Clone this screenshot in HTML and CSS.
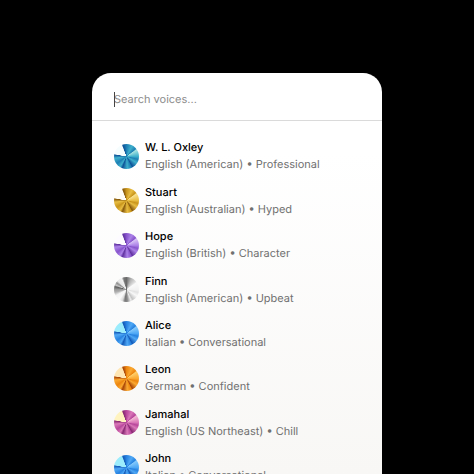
FILE: index.html
```html
<!DOCTYPE html>
<html lang="en">
<head>
    <meta charset="UTF-8">
    <meta name="viewport" content="width=device-width, initial-scale=1.0">
    <title>Voices</title>
    <link rel="stylesheet" href="styles.css">
</head>
<body>

<main class="panel">
    <div class="search">
        <input type="text" class="search-input" placeholder="Search voices..." aria-label="Search voices">
    </div>

    <ul class="voices">
        <li class="voice">
            <span class="orb teal"></span>
            <div>
                <div class="name">W. L. Oxley</div>
                <div class="detail">English (American) • Professional</div>
            </div>
        </li>
        <li class="voice">
            <span class="orb gold"></span>
            <div>
                <div class="name">Stuart</div>
                <div class="detail">English (Australian) • Hyped</div>
            </div>
        </li>
        <li class="voice">
            <span class="orb purple"></span>
            <div>
                <div class="name">Hope</div>
                <div class="detail">English (British) • Character</div>
            </div>
        </li>
        <li class="voice">
            <span class="orb silver"></span>
            <div>
                <div class="name">Finn</div>
                <div class="detail">English (American) • Upbeat</div>
            </div>
        </li>
        <li class="voice">
            <span class="orb blue"></span>
            <div>
                <div class="name">Alice</div>
                <div class="detail">Italian • Conversational</div>
            </div>
        </li>
        <li class="voice">
            <span class="orb orange"></span>
            <div>
                <div class="name">Leon</div>
                <div class="detail">German • Confident</div>
            </div>
        </li>
        <li class="voice">
            <span class="orb pink"></span>
            <div>
                <div class="name">Jamahal</div>
                <div class="detail">English (US Northeast) • Chill</div>
            </div>
        </li>
        <li class="voice">
            <span class="orb blue"></span>
            <div>
                <div class="name">John</div>
                <div class="detail">Italian • Conversational</div>
            </div>
        </li>
    </ul>
</main>

</body>
</html>
```
FILE: styles.css
```css
* {
    box-sizing: border-box;
}
body {
    margin: 0;
    height: 100vh;
    overflow: hidden;
    background: #000;
    font-family: Inter, "Liberation Sans", sans-serif;
    font-size: 11px;
    line-height: 17px;
    text-rendering: geometricPrecision;
}
.panel {
    max-width: 290px;
    margin: 73px auto 0;
    border-radius: 19px 19px 0 0;
    background: linear-gradient(#fff 80px, #f8f7f5 400px);
}
.search {
    position: relative;
    padding: 18px 22px 12px;
    border-bottom: 1px solid #dadada;
}
/* text cursor */
.search::before {
    content: "";
    position: absolute;
    left: 22px;
    top: 19px;
    width: 1px;
    height: 15px;
    background: #444;
}
.search-input {
    display: block;
    width: 100%;
    padding: 0;
    border: none;
    outline: none;
    background: none;
    font: inherit;
    text-rendering: inherit;
    color: #111;
}
.search-input::placeholder {
    color: #8c8c8c;
    opacity: 1;
}
.voices {
    display: grid;
    grid-auto-rows: 1fr;
    min-height: 75vh;
    margin: 0;
    padding: 13px 22px 0;
    box-sizing: content-box;
    list-style: none;
}
.voice {
    display: flex;
    align-items: center;
    gap: 6px;
}
.name {
    font-weight: 500;
    color: #000;
}
.detail {
    color: #707070;
}

/* metallic discs: wedges run from a light edge to a dark edge */
.orb {
    flex: none;
    width: 25px;
    height: 25px;
    border-radius: 50%;
    background: conic-gradient(
        var(--mid), var(--light) 28deg, var(--mid) 50deg,
        var(--pale) 56deg, var(--light) 90deg, var(--mid) 104deg,
        var(--light) 122deg, var(--dark) 150deg,
        var(--mid) 156deg, var(--light) 176deg, var(--dark) 200deg,
        var(--light) 212deg, var(--mid) 234deg,
        var(--light) 262deg, var(--dark) 278deg,
        var(--gap) 282deg, var(--gap) 336deg,
        var(--dark) 342deg, var(--mid));
}
.teal {
    --dark: #0d5298;
    --mid: #1d7fb4;
    --light: #3fb0cc;
    --pale: #a5e2e0;
    --gap: #f6fdfe;
}
.gold {
    --dark: #87590a;
    --mid: #c9951b;
    --light: #e8bd42;
    --pale: #f8e08c;
    --gap: #fffdf6;
}
.purple {
    --dark: #6031a0;
    --mid: #8855cc;
    --light: #ac82e8;
    --pale: #d8c2f5;
    --gap: #fdfbff;
}
.silver {
    background: conic-gradient(#6a6a6a, #b5b5b5 24deg, #dedede 48deg, #fafafa 56deg, #f2f2f2 92deg, #e2e2e2 104deg, #f8f8f8 122deg, #c4c4c4 148deg, #ececec 158deg, #888 176deg, #777 188deg, #dadada 200deg, #fafafa 216deg, #f4f4f4 240deg, #b0b0b0 256deg, #999 270deg, #5f5f5f 284deg, #c9c9c9 292deg, #8f8f8f 304deg, #e6e6e6 314deg, #f2f2f2 336deg, #777 346deg, #6a6a6a);
}
.blue {
    --dark: #1259b8;
    --mid: #2782e0;
    --light: #4fa8f5;
    --pale: #83c8fb;
    --gap: #9becfc;
}
.orange {
    --dark: #a84406;
    --mid: #ec850e;
    --light: #fba931;
    --pale: #ffce68;
    --gap: #ffe6b4;
}
.pink {
    --dark: #872872;
    --mid: #b8479b;
    --light: #da78b8;
    --pale: #f3b6d2;
    --gap: #fff3bf;
}
```
